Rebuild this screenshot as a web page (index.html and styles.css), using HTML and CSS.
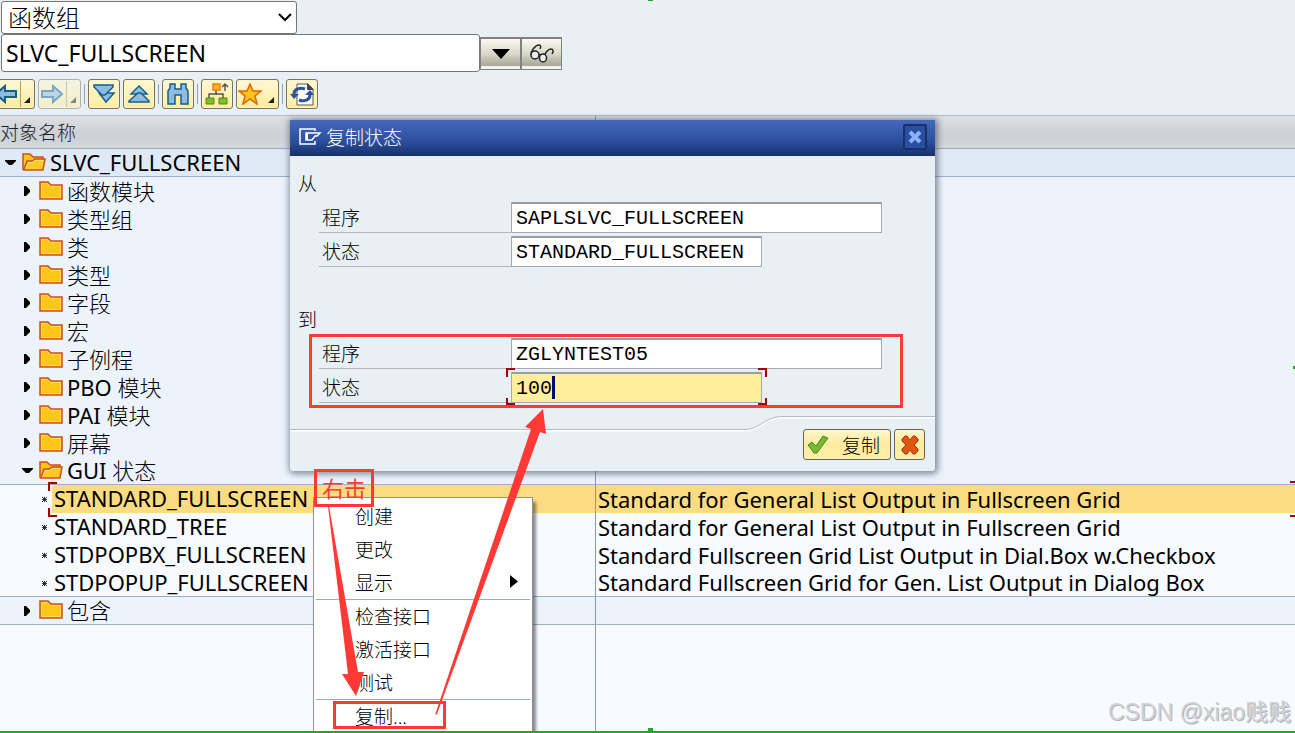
FILE: index.html
```
<!DOCTYPE html>
<html lang="zh-CN">

<head>
  <meta charset="UTF-8">
  <title>对象名称</title>
  <link rel="stylesheet" href="styles.css">
</head>

<body>

  <!-- shared icons -->
  <svg class="defs" width="0" height="0">
    <symbol id="folder" viewBox="0 0 24 19">
      <path d="M1 1h8l3 3h11v14H1z" fill="#ffc61a" stroke="#cf4f1c" stroke-width="1.500"/>
      <path d="M2.500 16.500V2.500h6l3 3h10v11z" fill="none" stroke="#ffdc5c"/>
    </symbol>
    <symbol id="folder-open" viewBox="0 0 24 19">
      <path d="M1 18V2h7l3 3h10v4" fill="#ffc61a" stroke="#cf4f1c" stroke-width="1.500"/>
      <path d="M2 18L5 9h5l3-2h10l-2 11z" fill="#ffc928" stroke="#cf4f1c" stroke-width="1.500"/>
      <path d="M3.500 16.500l3-6h4l3-2h8" fill="none" stroke="#ffe480"/>
    </symbol>
    <symbol id="closed" viewBox="0 0 12 12"><path d="M3 1h2l4 4v2l-4 4H3z" fill="#000"/></symbol>
    <symbol id="opened" viewBox="0 0 12 12"><path d="M1 3h11v1L8 8H5L1 4z" fill="#000"/></symbol>
    <symbol id="dot" viewBox="0 0 12 12"><path d="M4 4h1v1h1V4h1v1h1V4h1v1H8v1h1v1H8v1h1v1H8V8H7v1H6V8H5v1H4V8h1V7H4V6h1V5H4z" fill="#333"/></symbol>
    <symbol id="more" viewBox="0 0 6 6"><path d="M6 0v6H0z" fill="#222"/></symbol>
  </svg>

  <div class="app">
    <div class="object-bar">
      <div class="type-select">
        <select aria-label="对象类型">
          <option>函数组</option>
        </select>
        <svg class="chevron" width="14" height="9" viewBox="0 0 14 9"><path d="M1 1l6 6 6-6" fill="none" stroke="#000" stroke-width="2"/></svg>
      </div>
      <div class="name-row">
        <input type="text" class="name-input" value="SLVC_FULLSCREEN" aria-label="对象">
        <button class="grey-btn" aria-label="历史"><svg width="18" height="10"><path d="M0 0h18L9 10z"/></svg></button>
        <button class="grey-btn" aria-label="查看">
          <svg width="26" height="20" viewBox="0 0 26 20" fill="none" stroke="#222" stroke-width="1.500">
            <path d="M2 11C2 7 6 1 10 1c2 0 2 2 1 4M15 13c1-4 4-8 7-8 2 0 3 2 1 5M9 10l3 1"/>
            <ellipse cx="6" cy="11" rx="4" ry="4" fill="#eee"/>
            <ellipse cx="14" cy="14" rx="3.500" ry="4" fill="#eee"/>
          </svg>
        </button>
      </div>
    </div>

    <div class="toolbar">
      <button class="tool wide first" aria-label="后退">
        <svg width="24" height="20" viewBox="0 0 24 20"><path d="M2 10l9-8v5h11v6H11v5z" fill="#8fbbe0" stroke="#12608f" stroke-width="2"/></svg>
        <svg class="corner" width="6" height="6"><use href="#more"/></svg>
      </button>
      <button class="tool wide" aria-label="前进" disabled>
        <svg width="24" height="20" viewBox="0 0 24 20"><path d="M22 10l-9-8v5H2v6h11v5z" fill="#8fbbe0" stroke="#12608f" stroke-width="2"/></svg>
        <svg class="corner" width="6" height="6"><use href="#more"/></svg>
      </button>
      <span class="sep"></span>
      <button class="tool" aria-label="全部展开">
        <svg width="24" height="22" viewBox="0 0 24 22" fill="#8fbbe0" stroke="#12608f" stroke-width="1.500"><path d="M7 10h15l-8 9z"/><path d="M2 2h19v2l-8 8h-3L2 4z"/></svg>
      </button>
      <button class="tool" aria-label="全部折叠">
        <svg width="24" height="22" viewBox="0 0 24 22" fill="#8fbbe0" stroke="#12608f" stroke-width="1.500"><path d="M4 11l8-8 8 8z"/><path d="M2 19v-1l9-8h3l8 8v1z"/></svg>
      </button>
      <span class="sep"></span>
      <button class="tool" aria-label="查找">
        <svg width="24" height="24" viewBox="0 0 24 24"><path d="M2 22V9l2-3V2h5v5h6V2h5v4l2 3v13h-7v-9H9v9z" fill="#8fbbe0" stroke="#12608f" stroke-width="1.500"/></svg>
      </button>
      <span class="sep"></span>
      <button class="tool" aria-label="层次结构">
        <svg width="24" height="24" viewBox="0 0 24 24">
          <path d="M11 8v5M4 16v-4h14v4M20 9V2M17 5l3-3 3 3" fill="none" stroke="#555" stroke-width="1.500"/>
          <path d="M8 2h7v6H8z" fill="#ffb52a" stroke="#f08000" stroke-width="1.500"/>
          <path d="M1 16h8v6H1zM14 16h8v6h-8z" fill="#86bc25" stroke="#4c8c1c"/>
        </svg>
      </button>
      <button class="tool wide" aria-label="收藏">
        <svg width="24" height="22" viewBox="0 0 24 22"><path d="M12 1l3 7h8l-6 5 2 8-7-5-7 5 2-8-6-5h8z" fill="#ffc21a" stroke="#e0640c" stroke-width="1.500"/></svg>
        <svg class="corner" width="6" height="6"><use href="#more"/></svg>
      </button>
      <span class="sep"></span>
      <button class="tool" aria-label="刷新">
        <svg width="24" height="24" viewBox="0 0 24 24">
          <path d="M7 2h11l5 5v16H7z" fill="#fff" stroke="#555"/><path d="M17 1v7h7z" fill="#444"/>
          <path d="M4 12c0-5 6-7 11-5M20 13c0 5-6 7-11 5" fill="none" stroke="#2a52a0" stroke-width="3"/>
          <path d="M0 12h9l-5 5zM15 13h9l-4-5z" fill="#2a52a0"/>
        </svg>
      </button>
    </div>

    <div class="tree-area">
      <table class="tree">
        <colgroup><col class="col-name"><col></colgroup>
        <thead>
          <tr><th>对象名称</th><th></th></tr>
        </thead>
        <tbody>
          <tr class="root"><td><div class="node"><svg class="tw"><use href="#opened"/></svg><svg class="ico"><use href="#folder-open"/></svg>SLVC_FULLSCREEN</div></td><td></td></tr>
          <tr><td><div class="node"><svg class="tw"><use href="#closed"/></svg><svg class="ico"><use href="#folder"/></svg><span class="cn">函数模块</span></div></td><td></td></tr>
          <tr><td><div class="node"><svg class="tw"><use href="#closed"/></svg><svg class="ico"><use href="#folder"/></svg><span class="cn">类型组</span></div></td><td></td></tr>
          <tr><td><div class="node"><svg class="tw"><use href="#closed"/></svg><svg class="ico"><use href="#folder"/></svg><span class="cn">类</span></div></td><td></td></tr>
          <tr><td><div class="node"><svg class="tw"><use href="#closed"/></svg><svg class="ico"><use href="#folder"/></svg><span class="cn">类型</span></div></td><td></td></tr>
          <tr><td><div class="node"><svg class="tw"><use href="#closed"/></svg><svg class="ico"><use href="#folder"/></svg><span class="cn">字段</span></div></td><td></td></tr>
          <tr><td><div class="node"><svg class="tw"><use href="#closed"/></svg><svg class="ico"><use href="#folder"/></svg><span class="cn">宏</span></div></td><td></td></tr>
          <tr><td><div class="node"><svg class="tw"><use href="#closed"/></svg><svg class="ico"><use href="#folder"/></svg><span class="cn">子例程</span></div></td><td></td></tr>
          <tr><td><div class="node"><svg class="tw"><use href="#closed"/></svg><svg class="ico"><use href="#folder"/></svg><span>PBO <span class="cn">模块</span></span></div></td><td></td></tr>
          <tr><td><div class="node"><svg class="tw"><use href="#closed"/></svg><svg class="ico"><use href="#folder"/></svg><span>PAI <span class="cn">模块</span></span></div></td><td></td></tr>
          <tr><td><div class="node"><svg class="tw"><use href="#closed"/></svg><svg class="ico"><use href="#folder"/></svg><span class="cn">屏幕</span></div></td><td></td></tr>
          <tr class="line"><td><div class="node"><svg class="tw"><use href="#opened"/></svg><svg class="ico"><use href="#folder-open"/></svg><span>GUI <span class="cn">状态</span></span></div></td><td></td></tr>
          <tr class="leaf selected"><td><div class="node"><svg class="tw"><use href="#dot"/></svg><span class="leaf-name">STANDARD_FULLSCREEN</span></div></td><td>Standard for General List Output in Fullscreen Grid</td></tr>
          <tr class="leaf"><td><div class="node"><svg class="tw"><use href="#dot"/></svg><span class="leaf-name">STANDARD_TREE</span></div></td><td>Standard for General List Output in Fullscreen Grid</td></tr>
          <tr class="leaf"><td><div class="node"><svg class="tw"><use href="#dot"/></svg><span class="leaf-name">STDPOPBX_FULLSCREEN</span></div></td><td>Standard Fullscreen Grid List Output in Dial.Box w.Checkbox</td></tr>
          <tr class="leaf line"><td><div class="node"><svg class="tw"><use href="#dot"/></svg><span class="leaf-name">STDPOPUP_FULLSCREEN</span></div></td><td>Standard Fullscreen Grid for Gen. List Output in Dialog Box</td></tr>
          <tr class="line"><td><div class="node"><svg class="tw"><use href="#closed"/></svg><svg class="ico"><use href="#folder"/></svg><span class="cn">包含</span></div></td><td></td></tr>
        </tbody>
      </table>
      <div class="tree-rest"></div>
    </div>

    <!-- Context menu -->
    <div class="menu">
      <button>创建</button>
      <button>更改</button>
      <button>显示 <svg width="8" height="13"><path d="M0 0l8 6.500L0 13z"/></svg></button>
      <hr>
      <button>检查接口</button>
      <button>激活接口</button>
      <button>测试</button>
      <hr>
      <button>复制...</button>
    </div>

    <!-- Copy dialog -->
    <form class="dialog">
      <div class="dialog-title">
        <svg width="24" height="18" viewBox="0 0 24 18" fill="none" stroke="#fff"><path d="M17 3V1H2v15h15v-3" stroke-width="1.500"/><path d="M8 5h14l-3 3h-2l-3 4H8z" stroke-width="1.500"/><path d="M9 5v7" stroke-width="2"/></svg>
        <span>复制状态</span>
        <button type="button" class="close" aria-label="关闭"><svg width="14" height="14"><path d="M2 2l10 10M12 2L2 12" stroke="#8fb0ff" stroke-width="4"/></svg></button>
      </div>
      <div class="dialog-body">
        <div class="group">
          <div class="group-title">从</div>
          <div class="field"><label for="fromProg">程序</label><input type="text" id="fromProg" value="SAPLSLVC_FULLSCREEN"></div>
          <div class="field"><label for="fromStat">状态</label><input type="text" id="fromStat" class="short" value="STANDARD_FULLSCREEN"></div>
        </div>
        <div class="group">
          <div class="group-title">到</div>
          <div class="field"><label for="toProg">程序</label><input type="text" id="toProg" value="ZGLYNTEST05"></div>
          <div class="field current"><label for="toStat">状态</label><input type="text" id="toStat" class="short" value="100"><span class="caret"></span></div>
        </div>
      </div>
      <div class="dialog-footer">
        <svg class="curve" width="645" height="17" viewBox="0 0 645 17" fill="none"><path d="M0 14.500h455c15 0 20-13 37-13h153" stroke="#fff" stroke-width="2"/><path d="M0 13.500h455c15 0 20-13 37-13h153" stroke="#aebac8"/></svg>
        <button type="button" class="ok"><svg width="22" height="20" viewBox="0 0 22 20"><path d="M1 10l4-3 4 4L16 1l5 2L10 18H7z" fill="#7db82a" stroke="#3f8a3a"/></svg><span>复制</span></button>
        <button type="button" class="cancel" aria-label="取消"><svg width="18" height="20" viewBox="0 0 18 20"><path d="M1 4l3-3h2l3 4 3-4h2l3 3v2l-4 4 4 4v2l-3 3h-2l-3-4-3 4H4l-3-3v-2l4-4-4-4z" fill="#e0560f" stroke="#b03020"/></svg></button>
      </div>
    </form>

    <!-- Markers drawn over the screen -->
    <div class="mark mark-fields"></div>
    <div class="mark mark-click">右击</div>
    <div class="mark mark-copy"></div>
    <svg class="arrows" width="240" height="310" viewBox="320 407 240 310" fill="#ff3a36">
      <path d="M328 506L348 674H342L356 696 364 672H358L329 506z"/>
      <path d="M435 715L531 429 525 427 543 409 546 434 540 432 437 714z"/>
    </svg>
    <div class="watermark">CSDN @xiao贱贱</div>
    <i class="grip top"></i><i class="grip right"></i><i class="grip bottom"></i>
  </div>

</body>

</html>
```
FILE: styles.css
```
*,
*::before,
*::after {
  box-sizing: border-box;
}

body {
  margin: 0;
  font-family: "Noto Sans", "Noto Sans CJK SC", sans-serif;
  font-size: 22px;
  color: #000;
  background: #e8f0f6;
}

button,
input,
select {
  font-family: inherit;
  font-size: inherit;
  color: inherit;
  margin: 0;
  padding: 0;
}

svg {
  flex: none;
}

.defs {
  position: absolute;
}

.app {
  position: relative;
  display: flex;
  flex-direction: column;
  height: 100vh;
  overflow: hidden;
  border-bottom: 2px solid #1eaa28;
}

/* top search */
.object-bar {
  padding: 1px 1px 0;
}

.type-select {
  position: relative;
  width: 296px;
}

.type-select select {
  display: block;
  width: 100%;
  height: 33px;
  padding-left: 6px;
  font-size: 24px;
  font-weight: 300;
  line-height: 30px;
  appearance: none;
  background: #fff;
  border: 1px solid #767676;
  border-radius: 3px;
}

.chevron {
  position: absolute;
  right: 5px;
  top: 12px;
}

.name-row {
  display: flex;
  align-items: center;
}

.name-input {
  width: 479px;
  height: 38px;
  padding-left: 4px;
  font-size: 23px;
  border: 1px solid #767676;
  border-radius: 3px;
}

.grey-btn {
  display: flex;
  align-items: center;
  justify-content: center;
  width: 41px;
  height: 33px;
  background: linear-gradient(#fafaf0, #d8d8c8 50%, #a8a898 88%, #f4f4f0 92%);
  border: 2px solid #808080;
  border-width: 2px 1px 1px;
}

/* toolbar */
.toolbar {
  display: flex;
  gap: 3px;
  padding: 7px 0 6px;
}

.tool {
  position: relative;
  display: flex;
  align-items: center;
  justify-content: center;
  width: 32px;
  height: 30px;
  background: linear-gradient(#fff8d4, #ffec9c);
  border: 1px solid #77735f;
  border-radius: 3px;
  box-shadow: inset 0 0 0 1px #fff6c8;
}

.tool.wide {
  width: 43px;
  justify-content: flex-start;
  padding-left: 1px;
}

/* divider in front of the drop-down corner */
.tool.wide:not([aria-label="收藏"])::after {
  content: "";
  position: absolute;
  right: 13px;
  top: 1px;
  bottom: 1px;
  width: 1px;
  background: #a8a078;
}

.tool.first {
  margin-left: -8px;
}

.tool:disabled {
  opacity: 0.5;
}

.corner {
  position: absolute;
  right: 4px;
  bottom: 5px;
}

.sep {
  width: 1px;
  height: 20px;
  margin-top: 5px;
  background: #9aa0a6;
}

/* tree */
.tree-area {
  display: flex;
  flex-direction: column;
  flex: 1;
}

.tree {
  width: 100%;
  table-layout: fixed;
  border-collapse: separate;
  border-spacing: 0;
}

.col-name {
  width: 595px;
}

.tree th {
  height: 34px;
  padding: 0;
  font-size: 19px;
  font-weight: 300;
  text-align: left;
  color: #222;
  background: linear-gradient(#dde0e2, #ced3da 50%, #ced3da 75%, #d8dadc);
  border-top: 1px solid #b4bdc8;
  border-bottom: 1px solid #9ba8ba;
}

.tree td {
  height: 28px;
  padding: 0;
  line-height: 27px;
  font-weight: 400;
  white-space: nowrap;
  background: #ecf3fb;
}

.tree th + th,
.tree td + td {
  padding-left: 2px;
  border-left: 1px solid #8e99a8;
}

.tree .root td {
  background: #e0eaf6;
  border-bottom: 1px solid #9bb0c6;
}

.tree .line td {
  border-bottom: 1px solid #9bb0c6;
}

.tree .leaf td {
  background: #f7faff;
}

.tree .selected td + td,
.tree .selected .leaf-name {
  background: #fcdc80;
}

.cn {
  font-weight: 300;
}

.node {
  display: flex;
  align-items: center;
  height: 27px;
  padding-left: 21px;
}

.root .node {
  padding-left: 4px;
}

.leaf .node {
  height: 28px;
  padding-left: 38px;
}

.line .node {
  height: 27px;
}

.tw {
  width: 12px;
  height: 12px;
}

.ico {
  width: 24px;
  height: 19px;
  margin: 0 4px 2px 6px;
}

.leaf-name {
  flex: 1;
  align-self: stretch;
  margin-left: 2px;
  padding-left: 2px;
}

.selected .leaf-name {
  position: relative;
}

/* red focus corners of the selected row */
.selected .leaf-name::before,
.selected .leaf-name::after {
  content: "";
  position: absolute;
  left: -4px;
  width: 9px;
  height: 9px;
  border-left: 2px solid #a60000;
}

.selected .leaf-name::before {
  top: -3px;
  border-top: 2px solid #a60000;
}

.selected .leaf-name::after {
  bottom: -4px;
  border-bottom: 2px solid #a60000;
}

.selected td + td {
  position: relative;
}

.selected td + td::after {
  content: "";
  position: absolute;
  right: 0;
  top: -4px;
  width: 5px;
  height: 36px;
  border: solid #a60000;
  border-width: 2px 0;
}

.tree-rest {
  flex: 1;
  background: linear-gradient(#8e99a8, #8e99a8) 595px 0 / 1px 100% no-repeat #f7faff;
}

/* context menu */
.menu {
  position: absolute;
  left: 313px;
  top: 497px;
  width: 220px;
  padding: 2px;
  background: #fff;
  border: 1px solid #8d9299;
  box-shadow: 3px 5px 3px rgba(0, 0, 0, 0.45);
}

.menu button {
  display: flex;
  align-items: center;
  justify-content: space-between;
  width: 100%;
  height: 33px;
  padding: 0 12px 2px 39px;
  font-size: 19px;
  font-weight: 300;
  background: none;
  border: 0;
}

.menu hr {
  height: 1px;
  margin: 0;
  background: #9aaabb;
  border: 0;
}

/* dialog */
.dialog {
  position: absolute;
  left: 290px;
  top: 120px;
  width: 645px;
  background: #e8f0f6;
  border-radius: 0 0 3px 3px;
  box-shadow: 1px 1px 6px 2px rgba(60, 70, 90, 0.6);
  font-size: 19px;
  font-weight: 300;
}

.dialog-title {
  display: flex;
  align-items: center;
  height: 36px;
  padding: 0 8px 3px;
  gap: 4px;
  color: #fff;
  background: linear-gradient(#4468bc, #2c4e9c 60%, #17306c);
}

.close {
  display: flex;
  align-items: center;
  justify-content: center;
  width: 24px;
  height: 26px;
  margin-left: auto;
  background: #2b4fa0;
  border: 2px solid #17306c;
  border-radius: 2px;
}

.dialog-body {
  display: flex;
  flex-direction: column;
  gap: 43px;
  padding: 18px 8px 13px;
}

.group {
  display: flex;
  flex-direction: column;
  gap: 3px;
}

.group-title {
  line-height: 20px;
  margin-bottom: 5px;
}

.field {
  position: relative;
  display: flex;
  height: 31px;
  padding-left: 21px;
}

.field label {
  width: 192px;
  padding-left: 3px;
  line-height: 32px;
  border-bottom: 1px solid #b0b6bc;
}

.field input {
  width: 371px;
  padding: 0 4px;
  font-family: "Liberation Mono", "Noto Sans CJK SC", monospace;
  font-size: 20px;
  font-weight: 400;
  background: #fff;
  border: 1px solid #a5aab0;
  border-top: 2px solid #999da2;
  border-radius: 1px;
}

.field input.short {
  width: 251px;
}

.field.current input {
  background: #ffee9c;
}

.current::before,
.current::after {
  content: "";
  position: absolute;
  top: -4px;
  left: 208px;
  width: 9px;
  height: 37px;
  border: 2px solid #a60000;
  border-right: 0;
  clip-path: polygon(0 0, 100% 0, 100% 9px, 0 9px, 0 30px, 100% 30px, 100% 100%, 0 100%, 0 30px, -1px 30px, -1px 9px, 0 9px);
}

.current::after {
  left: 460px;
  border: 2px solid #a60000;
  border-left: 0;
  clip-path: polygon(0 0, 100% 0, 100% 9px, 0 9px, 0 30px, 100% 30px, 100% 100%, 0 100%);
}

.caret {
  position: absolute;
  left: 254px;
  top: 4px;
  width: 3px;
  height: 23px;
  background: #001060;
}

.dialog-footer {
  position: relative;
  display: flex;
  justify-content: flex-end;
  gap: 3px;
  padding: 13px 10px 11px;
}

.curve {
  position: absolute;
  left: 0;
  top: 0;
}

.ok,
.cancel {
  position: relative;
  display: flex;
  align-items: center;
  height: 31px;
  font-weight: 300;
  background: linear-gradient(#fff6cc, #ffec9c 50%, #ffefa8);
  border: 1px solid #66635a;
  border-radius: 3px;
}

.ok {
  width: 88px;
  justify-content: space-between;
  padding: 0 10px 0 3px;
  font-size: 19px;
}

.cancel {
  width: 31px;
  justify-content: center;
}

/* markers */
.mark {
  position: absolute;
  border: 3px solid #ff3a36;
}

.mark-fields {
  left: 309px;
  top: 334px;
  width: 594px;
  height: 74px;
}

.mark-click {
  left: 314px;
  top: 469px;
  width: 60px;
  height: 38px;
  line-height: 32px;
  text-align: center;
  color: #ff3a36;
}

.mark-copy {
  left: 333px;
  top: 701px;
  width: 113px;
  height: 28px;
}

.arrows {
  position: absolute;
  left: 320px;
  top: 407px;
}

.watermark {
  position: absolute;
  right: 4px;
  bottom: 2px;
  line-height: 34px;
  font-family: "Liberation Sans", "Noto Sans CJK SC", sans-serif;
  font-size: 23px;
  color: #d0d2d5;
  text-shadow: 1px 1px 0 #b4b4b4;
}

.grip {
  position: absolute;
  width: 5px;
  height: 3px;
  background: #1eaa28;
}

.grip.top {
  left: 50%;
  top: -2px;
}

.grip.right {
  right: -3px;
  top: 50%;
}

.grip.bottom {
  left: 50%;
  bottom: 0;
}
```
